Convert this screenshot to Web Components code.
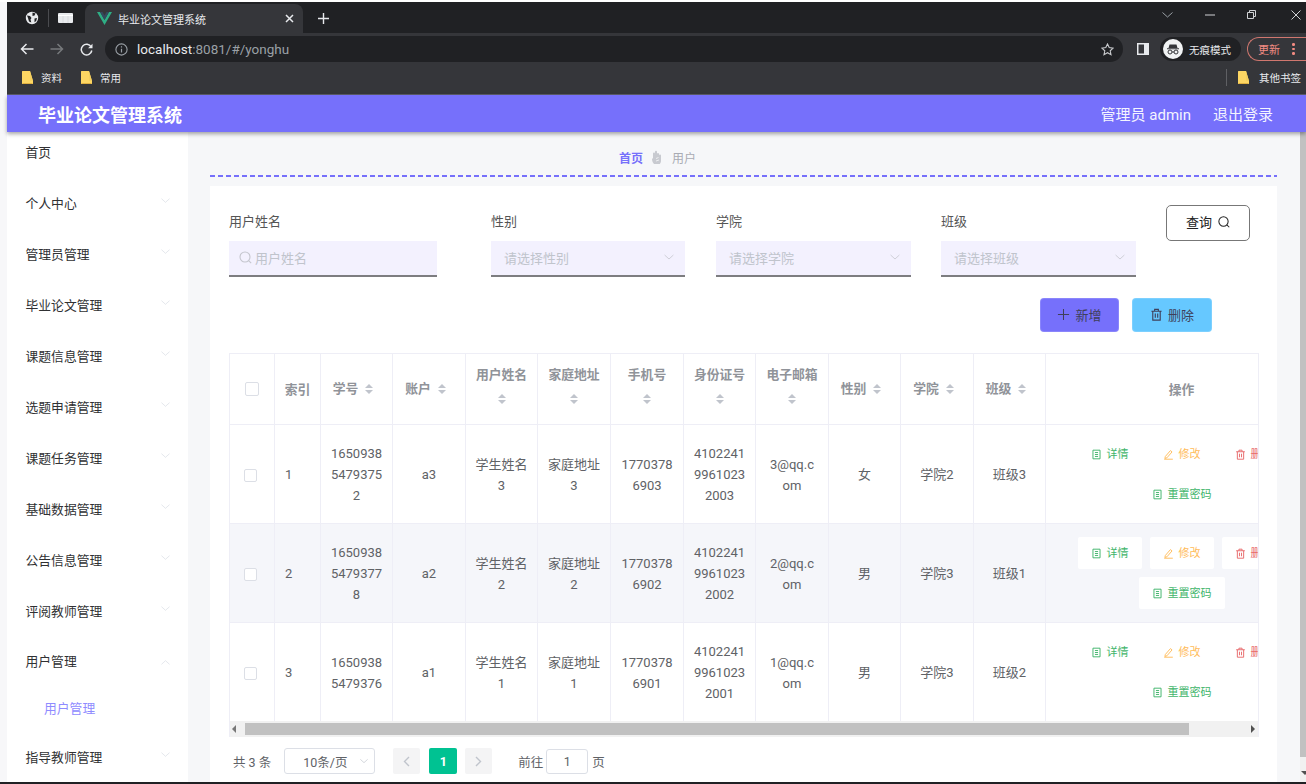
<!DOCTYPE html>
<html lang="zh">
<head>
<meta charset="utf-8">
<title>毕业论文管理系统</title>
<style>
html, body {margin:0; height:784px; overflow:hidden; background:#f7f7f9;}
body {font-family:"Roboto","Noto Sans CJK SC",sans-serif; font-size:13px; color:#606266;}
</style>
</head>
<body>
<app-shell>
	<browser-bar slot="bar"></browser-bar>
	<app-header slot="header" title="毕业论文管理系统" user="管理员 admin" logout="退出登录"></app-header>
	<side-menu slot="side">
		<menu-item first>首页</menu-item>
		<menu-item arrow="down">个人中心</menu-item>
		<menu-item arrow="down">管理员管理</menu-item>
		<menu-item arrow="down">毕业论文管理</menu-item>
		<menu-item arrow="down">课题信息管理</menu-item>
		<menu-item arrow="down">选题申请管理</menu-item>
		<menu-item arrow="down">课题任务管理</menu-item>
		<menu-item arrow="down">基础数据管理</menu-item>
		<menu-item arrow="down">公告信息管理</menu-item>
		<menu-item arrow="down">评阅教师管理</menu-item>
		<menu-item arrow="up">用户管理</menu-item>
		<menu-item sub>用户管理</menu-item>
		<menu-item arrow="down">指导教师管理</menu-item>
	</side-menu>
	<page-crumb slot="crumb" home="首页" here="用户"></page-crumb>
	<user-card slot="card"></user-card>
</app-shell>

<script>
const ICONS = {
	search: '<circle cx="7" cy="7" r="5" fill="none" stroke="currentColor" stroke-width="1.1"/><path d="M10.6 10.6l2.6 2.6" stroke="currentColor" stroke-width="1.1" fill="none"/>',
	chevron: '<path d="M2 5l5.5 5L13 5" fill="none" stroke="currentColor" stroke-width="1"/>',
	tickets: '<path d="M2.5 1.500h9v11h-9z M5 4.500h4 M5 7h4 M5 9.500h4" fill="none" stroke="currentColor" stroke-width="1.200"/>',
	edit: '<path d="M3 9.500L9.500 2l2 1.700L5 11.200l-2.600.8z M1.500 13h11" fill="none" stroke="currentColor" stroke-width="1.200"/>',
	trash: '<path d="M1.500 3.500h11 M5 3.500V1.500h4v2 M3 3.500v9.500h8V3.500 M5.700 6v4.500 M8.300 6v4.500" fill="none" stroke="currentColor" stroke-width="1.200"/>',
	plus: '<path d="M7 1v12 M1 7h12" fill="none" stroke="currentColor" stroke-width="1.100"/>'
};
const icon = (name, size, box = 14) => `<svg width="${size}" height="${size}" viewBox="0 0 ${box + (name == 'chevron' ? 1 : 0)} ${box + (name == 'chevron' ? 1 : 0)}">${ICONS[name]}</svg>`;

class AppShell extends HTMLElement {
	constructor() {
		super();
		this.attachShadow({ mode: 'open' }).innerHTML = `
		<style>
		:host {display:flex; flex-direction:column; height:784px; box-sizing:border-box; padding:2px 0 0 7px; background:linear-gradient(#fff 0 2px,#f7f7f9 2px);}
		.body {display:flex; height:650px; flex:none;}
		.side {width:181px; flex:none; background:#fff;}
		.main {flex:1; min-width:0; background:#f6f7f9; display:flex; flex-direction:column; padding:0 23px 0 22px; overflow:hidden;}
		.vbar {width:6px; flex:none; background:#f1f1f1; display:flex; flex-direction:column;}
		.vbar i {display:block; flex:none; height:625px; background:#c1c1c1;}
		.vbar b {display:block; width:0; height:0; margin:14px 0 0 1px; border:4px solid transparent; border-top:4px solid #505050; border-bottom:0;}
		.foot {flex:1; margin-left:-7px; background:#202124;}
		.head {position:relative; z-index:2;}
		</style>
		<slot name="bar"></slot>
		<div class="head"><slot name="header"></slot></div>
		<div class="body">
			<div class="side"><slot name="side"></slot></div>
			<div class="main"><slot name="crumb"></slot><slot name="card"></slot></div>
			<div class="vbar"><i></i><b></b></div>
		</div>
		<div class="foot"></div>`;
	}
}

class BrowserBar extends HTMLElement {
	constructor() {
		super();
		this.attachShadow({ mode: 'open' }).innerHTML = `
		<style>
		:host {display:block; font-family:"Roboto","Noto Sans CJK SC",sans-serif; color:#e8eaed;}
		svg {display:block; flex:none;}
		.tabs {height:31px; background:#202124; display:flex; align-items:flex-end; padding-left:18px;}
		.tabs .pin {display:flex; align-items:center; height:31px; width:60px; gap:9px;}
		.tabs .sep {width:1px; height:18px; background:#4a4b4f;}
		.tab {height:29px; width:218px; background:#35363a; border-radius:8px 8px 0 0; display:flex; align-items:center; padding:0 9px 0 12px; box-sizing:border-box; font-size:11px; gap:6px;}
		.tab span {flex:1;}
		.newtab {margin:0 0 9px 15px;}
		.win {margin-left:auto; display:flex; align-items:center; height:31px; padding-bottom:6px; box-sizing:border-box;}
		.tool {height:29px; background:#35363a; display:flex; align-items:center; padding:3px 0 0 13px; box-sizing:border-box;}
		.tool .nav {display:flex; align-items:center; gap:16px; width:85px;}
		.omni {width:1018px; height:26px; border-radius:13px; background:#202124; display:flex; align-items:center; padding:0 9px 0 10px; box-sizing:border-box; font-size:13.500px; gap:9px; flex:none;}
		.omni span {flex:1; white-space:nowrap; color:#e8eaed;}
		.omni em {font-style:normal; color:#9aa0a6;}
		.panel {margin-left:14px;}
		.incog {margin-left:11px; width:81px; height:24px; border-radius:12px; background:#202124; display:flex; align-items:center; gap:6px; padding-left:3px; box-sizing:border-box; font-size:10.500px; flex:none;}
		.update {margin-left:6px; flex:1; height:24px; border:1px solid #d0776f; border-right:0; border-radius:12px 0 0 12px; box-sizing:border-box; display:flex; align-items:center; padding-left:10px; font-size:11px; color:#f28b82; gap:12px;}
		.dots {display:flex; flex-direction:column; gap:2px;}
		.dots i {display:block; width:2.500px; height:2.500px; border-radius:50%; background:#f28b82;}
		.marks {height:33px; background:#35363a; display:flex; align-items:center; padding:0 5px 2px 15px; box-sizing:border-box; font-size:10.500px; border-bottom:1px solid #5c5c6a;}
		.marks .m {display:flex; align-items:center; gap:8px; margin-right:19px;}
		.marks .end {margin-left:auto; display:flex; align-items:center; gap:10px;}
		.marks .bar {width:1px; height:17px; background:#5f6064; margin-right:1px;}
		</style>
		<div class="tabs">
			<div class="pin">
				<svg width="14" height="14" viewBox="0 0 14 14"><circle cx="7" cy="7" r="6.200" fill="#e8eaed"/><path d="M2 4.500l3 .5 1.500 2-1 1.500.8 3L4 10.500 3 7z M7.500 1.500l3 1-1 2-2 .5z M9.500 7.500l2.500-.5-.8 3-1.700 1.200z" fill="#202124"/></svg>
				<div class="sep"></div>
				<svg width="15" height="10" viewBox="0 0 15 10"><rect width="15" height="10" rx="1" fill="#e8eaed"/><path d="M0 2.500h15" stroke="#fff" stroke-width="1"/><path d="M5 3v7 M10 3v7" stroke="#cfd1d4" stroke-width=".6"/></svg>
			</div>
			<div class="tab">
				<svg width="15" height="13" viewBox="0 0 15 13"><path d="M0 0h3l4.500 8L12 0h3L7.500 13z" fill="#2fae85"/><path d="M3 0h2.500l2 3.600L9.500 0H12L7.500 8z" fill="#34495e"/></svg>
				<span>毕业论文管理系统</span>
				<svg width="9" height="9" viewBox="0 0 9 9"><path d="M1 1l7 7 M8 1L1 8" stroke="#e8eaed" stroke-width="1.500"/></svg>
			</div>
			<svg class="newtab" width="11" height="11" viewBox="0 0 11 11"><path d="M5.500 0v11 M0 5.500h11" stroke="#e8eaed" stroke-width="1.400"/></svg>
			<div class="win">
				<svg width="11" height="6" viewBox="0 0 11 6" style="margin-right:32px"><path d="M.5.500l5 4.500 5-4.500" fill="none" stroke="#9aa0a6" stroke-width="1"/></svg>
				<svg width="10" height="10" viewBox="0 0 10 10" style="margin-right:32px"><path d="M0 5h10" stroke="#d0d2d5" stroke-width="1"/></svg>
				<svg width="9" height="9" viewBox="0 0 9 9" style="margin-right:35.500px"><path d="M.5 2.500h6v6h-6z M2.500 2.500v-2h6v6h-2" fill="none" stroke="#d0d2d5" stroke-width="1"/></svg>
				<svg width="10" height="10" viewBox="0 0 10 10" style="margin-right:5px"><path d="M.5.500l9 9 M9.500.500l-9 9" stroke="#d0d2d5" stroke-width="1"/></svg>
			</div>
		</div>
		<div class="tool">
			<div class="nav">
				<svg width="14" height="12" viewBox="0 0 14 12"><path d="M13.500 6H1.500 M6.500 1L1.500 6l5 5" fill="none" stroke="#e8eaed" stroke-width="1.500"/></svg>
				<svg width="14" height="12" viewBox="0 0 14 12"><path d="M.5 6h12 M7.500 1l5 5-5 5" fill="none" stroke="#77797c" stroke-width="1.500"/></svg>
				<svg width="13" height="13" viewBox="0 0 13 13"><path d="M11.200 4A5.300 5.300 0 1 0 11.800 7.500" fill="none" stroke="#e8eaed" stroke-width="1.500"/><path d="M12.500 0.800v4.400H8.100z" fill="#e8eaed"/></svg>
			</div>
			<div class="omni">
				<svg width="13" height="13" viewBox="0 0 13 13"><circle cx="6.500" cy="6.500" r="5.600" fill="none" stroke="#9aa0a6" stroke-width="1.100"/><path d="M6.500 5.700v3.800 M6.500 3.300v1.200" stroke="#9aa0a6" stroke-width="1.200"/></svg>
				<span>localhost<em>:8081/#/yonghu</em></span>
				<svg width="13" height="13" viewBox="0 0 13 13"><path d="M6.500 1l1.700 3.600 3.900.5-2.900 2.700.8 3.900-3.500-2-3.500 2 .8-3.900L.9 5.100l3.900-.5z" fill="none" stroke="#c8cacd" stroke-width="1.100"/></svg>
			</div>
			<svg class="panel" width="12" height="12" viewBox="0 0 12 12"><rect x=".75" y=".75" width="10.500" height="10.500" fill="none" stroke="#e8eaed" stroke-width="1.500"/><rect x="7" y="1" width="4" height="10" fill="#e8eaed"/></svg>
			<div class="incog">
				<svg width="20" height="20" viewBox="0 0 20 20"><circle cx="10" cy="10" r="10" fill="#f1f3f4"/><path d="M6.500 5.500h7l1 3.500h-9z M4 9.300h12v1H4z" fill="#35363a"/><circle cx="7" cy="13" r="2" fill="none" stroke="#35363a" stroke-width="1"/><circle cx="13" cy="13" r="2" fill="none" stroke="#35363a" stroke-width="1"/><path d="M9 13h2" stroke="#35363a"/></svg>
				<span>无痕模式</span>
			</div>
			<div class="update"><span>更新</span><div class="dots"><i></i><i></i><i></i></div></div>
		</div>
		<div class="marks">
			<div class="m"><folder-mark></folder-mark>资料</div>
			<div class="m"><folder-mark></folder-mark>常用</div>
			<div class="end"><div class="bar"></div><folder-mark></folder-mark><span>其他书签</span></div>
		</div>`;
	}
}

class FolderMark extends HTMLElement {
	constructor() {
		super();
		this.attachShadow({ mode: 'open' }).innerHTML = `
		<style>:host {display:block; width:11px; height:13px;} svg {display:block;}</style>
		<svg width="11" height="13" viewBox="0 0 11 13"><path d="M0 .5A.5.500 0 0 1 .5 0h7.500l3 10v2.500a.5.500 0 0 1-.5.500H.5a.5.500 0 0 1-.5-.5z" fill="#fdd663"/><path d="M8 0l3 10H8z" fill="#f4cf5f"/><path d="M.5 12.500h10" stroke="#e0b040"/></svg>`;
	}
}

class AppHeader extends HTMLElement {
	connectedCallback() {
		this.attachShadow({ mode: 'open' }).innerHTML = `
		<style>
		:host {display:flex; align-items:center; height:37px; background:#7670fb; color:#f4f4ff; padding:0 33px 0 31px; box-shadow:0 2px 4px rgba(0,0,0,.35);}
		h1 {margin:0; font-size:18px; font-weight:700; color:#fff; flex:1;}
		span {font-size:15px;}
		.out {margin-left:22px;}
		</style>
		<h1>${this.getAttribute('title')}</h1>
		<span>${this.getAttribute('user')}</span>
		<span class="out">${this.getAttribute('logout')}</span>`;
	}
}

class SideMenu extends HTMLElement {
	constructor() {
		super();
		this.attachShadow({ mode: 'open' }).innerHTML = `
		<style>:host {display:flex; flex-direction:column; color:#303133;}</style>
		<slot></slot>`;
	}
}

class MenuItem extends HTMLElement {
	connectedCallback() {
		const arrow = this.getAttribute('arrow');
		this.attachShadow({ mode: 'open' }).innerHTML = `
		<style>
		:host {display:flex; align-items:center; justify-content:space-between; height:50.900px; padding:0 17px 0 18.500px; flex:none; font-size:12.800px; color:#303133;}
		:host([first]) {height:38px; margin-bottom:7.500px;}
		:host([sub]) {height:45px; box-sizing:border-box; padding-left:37px; padding-bottom:2px; color:#8f8bff;}
		svg {color:#dcdfe6; margin-top:-4px; display:block;}
		.up {transform:rotate(180deg);}
		</style>
		<slot></slot>
		${arrow ? `<span class="${arrow}">${icon('chevron', 11)}</span>` : ''}`;
	}
}

class PageCrumb extends HTMLElement {
	connectedCallback() {
		this.attachShadow({ mode: 'open' }).innerHTML = `
		<style>
		:host {display:flex; align-items:center; height:45px; box-sizing:border-box; padding:5px 0 0 409px; gap:8px; font-size:12px; color:#a9abb3; flex:none;
			background:repeating-linear-gradient(90deg,#7670fb 0 5px,transparent 5px 8px) 0 100%/100% 2px no-repeat;}
		b {color:#7670fb; font-weight:700;}
		svg {display:block; margin-right:1px;}
		</style>
		<b>${this.getAttribute('home')}</b>
		<svg width="12" height="15" viewBox="0 0 12 15"><path d="M3 14c-1-1-2-3-2-5l1-1V3.500a1 1 0 0 1 2 0V1.800a1 1 0 0 1 2 0V4a1 1 0 0 1 2 0v1.500a1 1 0 0 1 2 0V11c0 1-.5 2.200-1.200 3z" fill="#c8cad0"/><path d="M5 8.500l2.500-1M5 11l3-1" stroke="#f6f7f9" stroke-width=".8"/></svg>
		<span>${this.getAttribute('here')}</span>`;
	}
}

class FormField extends HTMLElement {
	connectedCallback() {
		const select = this.hasAttribute('select');
		this.attachShadow({ mode: 'open' }).innerHTML = `
		<style>
		:host {display:flex; flex-direction:column; gap:9px;}
		label {font-size:13px; line-height:20px; height:27px; padding-top:7px; box-sizing:border-box; color:#555;}
		.box {height:36px; box-sizing:border-box; background:#f3f1fe; border-bottom:2px solid #7d7d80; display:flex; align-items:center; color:#c0c4cc; font-size:13px; padding:0 10px 2px 13px;}
		.box span {flex:1;}
		:host(:not([select])) .box {padding-left:9px; gap:3px;}
		svg {display:block; color:#c5c6ce;}
		</style>
		<label>${this.getAttribute('label')}</label>
		<div class="box">
			${select ? '' : icon('search', 14)}
			<span>${this.getAttribute('hint')}</span>
			${select ? icon('chevron', 12) : ''}
		</div>`;
	}
}

class PlainButton extends HTMLElement {
	connectedCallback() {
		const name = this.getAttribute('icon');
		const after = this.hasAttribute('after');
		const label = '<slot></slot>';
		const mark = name ? icon(name, 13) : '';
		this.attachShadow({ mode: 'open' }).innerHTML = `
		<style>
		:host {display:inline-flex; align-items:center; justify-content:center; gap:5px; box-sizing:border-box; border-radius:4px; font-size:13px; color:#3f3f5a; border:1px solid rgba(255,255,255,.15); padding-bottom:2px;}
		:host([kind=add]) {background:#7670fb; width:79px; height:34px;}
		:host([kind=del]) {background:#66c8ff; width:80px; height:34px;}
		:host([kind=query]) {background:#fff; border:1px solid #777; width:84px; height:36px; color:#222; border-radius:5px; padding-bottom:3px;}
		svg {display:block;}
		</style>
		${after ? label + mark : mark + label}`;
	}
}

class UserCard extends HTMLElement {
	constructor() {
		super();
		this.attachShadow({ mode: 'open' }).innerHTML = `
		<style>
		:host {display:block; background:#fff; margin-top:9px; padding:19px 18px 0 19px; flex:1;}
		.filters {display:grid; grid-template-columns:232px 195px 195px 195px 84px; column-gap:30px; height:72px; align-items:start;}
		form-field:first-child {width:208px;}
		form-field:nth-child(2) {width:194px;}
		.tools {display:flex; justify-content:flex-end; gap:13px; padding-right:47px; margin-top:21px;}
		data-table {margin-top:21px;}
		</style>
		<div class="filters">
			<form-field label="用户姓名" hint="用户姓名"></form-field>
			<form-field select label="性别" hint="请选择性别"></form-field>
			<form-field select label="学院" hint="请选择学院"></form-field>
			<form-field select label="班级" hint="请选择班级"></form-field>
			<plain-button kind="query" icon="search" after>查询</plain-button>
		</div>
		<div class="tools">
			<plain-button kind="add" icon="plus">新增</plain-button>
			<plain-button kind="del" icon="trash">删除</plain-button>
		</div>
		<data-table></data-table>
		<table-pager total="3" size="10条/页" page="1"></table-pager>`;
	}
}

const COLUMNS = [
	['索引', 46, 0, 0], ['学号', 72, 1, 0], ['账户', 73, 1, 0], ['用户姓名', 72, 1, 1],
	['家庭地址', 73, 1, 1], ['手机号', 73, 1, 1], ['身份证号', 72, 1, 1], ['电子邮箱', 73, 1, 1],
	['性别', 72, 1, 0], ['学院', 73, 1, 0], ['班级', 72, 1, 0]
];
const ROWS = [
	['1', '1650938\n5479375\n2', 'a3', '学生姓名\n3', '家庭地址\n3', '1770378\n6903', '4102241\n9961023\n2003', '3@qq.c\nom', '女', '学院2', '班级3'],
	['2', '1650938\n5479377\n8', 'a2', '学生姓名\n2', '家庭地址\n2', '1770378\n6902', '4102241\n9961023\n2002', '2@qq.c\nom', '男', '学院3', '班级1'],
	['3', '1650938\n5479376', 'a1', '学生姓名\n1', '家庭地址\n1', '1770378\n6901', '4102241\n9961023\n2001', '1@qq.c\nom', '男', '学院3', '班级2']
];

class DataTable extends HTMLElement {
	connectedCallback() {
		const caret = '<span class="caret"><i></i><u></u></span>';
		const head = COLUMNS.map(([t, w, sort, wrap]) =>
			`<th class="${sort ? '' : 'plain'}"><span class="${wrap ? 'stack' : ''}">${t}</span>${sort ? caret : ''}</th>`).join('');
		const body = ROWS.map((r) => `<tr>
			<td class="chk"><span class="box"></span></td>
			${r.map((c, i) => `<td class="${i == 0 ? 'idx' : ''}">${c}</td>`).join('')}
			<td class="ops"><div>
				<row-action tone="green" icon="tickets">详情</row-action>
				<row-action tone="orange" icon="edit">修改</row-action>
				<row-action tone="red" icon="trash">删除</row-action>
				<row-action tone="green" icon="tickets" wide>重置密码</row-action>
			</div></td></tr>`).join('');
		this.attachShadow({ mode: 'open' }).innerHTML = `
		<style>
		:host {display:block; width:1030px; border:solid #eeeef6; border-width:1px 1px 0 1px; box-sizing:border-box; overflow:hidden; font-size:13px;}
		.wrap {overflow:hidden; height:367px;}
		table {border-collapse:separate; border-spacing:0; table-layout:fixed; width:1088px;}
		th, td {box-sizing:border-box; border:solid #eeeef6; border-width:0 1px 1px 0; padding:0; text-align:center; font-weight:400;}
		th {height:71px; color:#909399; font-weight:700; font-size:12.800px; line-height:24px;}
		th.plain {padding-top:2px;}
		td {height:99px; padding-top:3px; line-height:20.800px; white-space:pre-line; color:#606266;}
		td.ops {padding-top:0;}
		tr:nth-child(2) td {background:#f5f6fa;}
		.stack {display:block;}
		.caret {display:inline-block; vertical-align:middle; width:10px; margin:-2px 6px 0 6px;}
		.stack + .caret {display:block; margin:7px auto 11px;}
		.caret i, .caret u {display:block; width:0; height:0; border:4.500px solid transparent; margin:0 auto; box-sizing:content-box;}
		.caret i {border-top:0; border-bottom:4.500px solid #c0c4cc; margin-bottom:2px;}
		.caret u {border-bottom:0; border-top:4.500px solid #c0c4cc;}
		.box {display:block; width:13px; height:13px; border:1px solid #dcdfe6; border-radius:2px; box-sizing:border-box; margin:0 auto; background:#fff;}
		th .box {width:14px; height:14px;}
		td.chk .box {position:relative; left:-2px;}
		.idx {text-align:left; padding-left:10px;}
		.ops div {display:flex; flex-wrap:wrap; justify-content:center; gap:8px; padding:0 15px;}
		.bar {height:16px; background:#f1f1f1; display:flex; align-items:center; position:relative;}
		.bar i {display:block; height:12px; width:944px; margin-left:15px; background:#c1c1c1;}
		.bar b {display:block; width:0; height:0; border:4px solid transparent; position:absolute; top:4px;}
		.bar b.l {left:2px; border-right-color:#777; border-left:0;}
		.bar b.r {right:3px; border-left-color:#505050; border-right:0;}
		</style>
		<div class="wrap"><table>
			<colgroup><col style="width:45px">${COLUMNS.map((c) => `<col style="width:${c[1]}px">`).join('')}<col style="width:272px"></colgroup>
			<thead><tr><th><span class="box"></span></th>${head}<th class="plain">操作</th></tr></thead>
			<tbody>${body}</tbody>
		</table></div>
		<div class="bar"><b class="l"></b><i></i><b class="r"></b></div>`;
	}
}

class RowAction extends HTMLElement {
	connectedCallback() {
		this.attachShadow({ mode: 'open' }).innerHTML = `
		<style>
		:host {display:inline-flex; align-items:center; justify-content:center; gap:5px; width:64px; height:32px; background:#fff; font-size:11px; line-height:1; border-radius:2px; white-space:nowrap;}
		:host([wide]) {width:86px;}
		:host([tone=green]) {color:#3fb56a;}
		:host([tone=orange]) {color:#ffbc5a;}
		:host([tone=red]) {color:#e8686a;}
		svg {display:block; flex:none;}
		</style>
		${icon(this.getAttribute('icon'), 11)}<slot></slot>`;
	}
}

class TablePager extends HTMLElement {
	connectedCallback() {
		this.attachShadow({ mode: 'open' }).innerHTML = `
		<style>
		:host {display:flex; align-items:center; height:26px; margin-top:11px; padding-left:4px; font-size:12.500px; color:#606266;}
		.sel {margin-left:13px; width:91px; height:26px; box-sizing:border-box; border:1px solid #dcdfe6; border-radius:3px; display:flex; align-items:center; padding:0 5px 0 18px; justify-content:space-between;}
		.sel svg {color:#c0c4cc; display:block;}
		.btn {width:27px; height:26px; background:#f4f4f5; border-radius:2px; display:flex; align-items:center; justify-content:center; color:#c0c4cc; box-sizing:border-box;}
		.btn svg {display:block;}
		.prev {margin-left:18px;}
		.cur {width:28px; margin:0 8px 0 9px; background:#00c292; color:#fff; font-weight:700;}
		.to {margin-left:26px;}
		.num {width:42px; height:25px; margin:0 4px 0 3px; box-sizing:border-box; border:1px solid #dcdfe6; border-radius:3px; display:flex; align-items:center; justify-content:center;}
		</style>
		<span>共 ${this.getAttribute('total')} 条</span>
		<div class="sel"><span>${this.getAttribute('size')}</span>${icon('chevron', 10)}</div>
		<div class="btn prev"><svg width="7" height="11" viewBox="0 0 7 11"><path d="M6 1L1.500 5.500 6 10" fill="none" stroke="currentColor" stroke-width="1.400"/></svg></div>
		<div class="btn cur">${this.getAttribute('page')}</div>
		<div class="btn"><svg width="7" height="11" viewBox="0 0 7 11"><path d="M1 1l4.500 4.500L1 10" fill="none" stroke="currentColor" stroke-width="1.400"/></svg></div>
		<span class="to">前往</span>
		<div class="num">${this.getAttribute('page')}</div>
		<span>页</span>`;
	}
}

customElements.define('app-shell', AppShell);
customElements.define('folder-mark', FolderMark);
customElements.define('browser-bar', BrowserBar);
customElements.define('app-header', AppHeader);
customElements.define('side-menu', SideMenu);
customElements.define('menu-item', MenuItem);
customElements.define('page-crumb', PageCrumb);
customElements.define('form-field', FormField);
customElements.define('plain-button', PlainButton);
customElements.define('row-action', RowAction);
customElements.define('table-pager', TablePager);
customElements.define('data-table', DataTable);
customElements.define('user-card', UserCard);
</script>
</body>
</html>
